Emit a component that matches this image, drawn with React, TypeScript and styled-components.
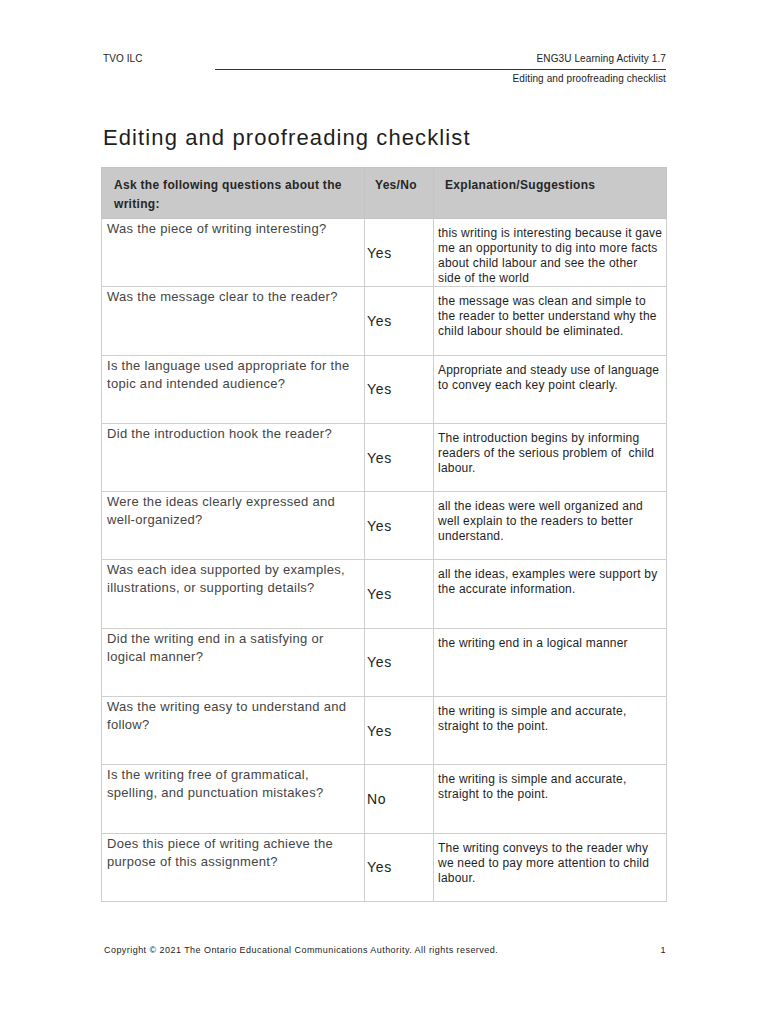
import React from "react";
import styled, { createGlobalStyle } from "styled-components";

const Global = createGlobalStyle`
  html, body { margin: 0; padding: 0; background: #ffffff; }
  body { font-family: "Liberation Sans", Arial, sans-serif; color: #222; }
`;

const Page = styled.div`
  width: 768px;
  height: 1024px;
  box-sizing: border-box;
  padding: 53px 102px 0 101px;
  display: flex;
  flex-direction: column;
`;

const RunningHead = styled.header`
  margin-left: 2px;
  display: flex;
  flex-direction: column;
  font-size: 10px;
  line-height: 12px;
  letter-spacing: 0.1px;
  color: #222;
`;

const HeadTop = styled.div`
  display: flex;
  justify-content: space-between;
`;

const HeadRule = styled.div`
  margin: 4px 0 0 112px;
  border-top: 1px solid #333;
`;

const HeadSub = styled.div`
  margin-top: 3px;
  text-align: right;
`;

const Title = styled.h1`
  margin: 40px 0 0 2px;
  font-size: 22px;
  line-height: 26px;
  letter-spacing: 1.1px;
  font-weight: normal;
  color: #1e1e1e;
`;

const Table = styled.table`
  margin: 16px 0 0 0;
  width: 565px;
  border-collapse: collapse;
  table-layout: fixed;
`;

const HeadCell = styled.th<{ $w: number; $pl: number }>`
  width: ${(p) => p.$w}px;
  height: 51px;
  box-sizing: border-box;
  background: #c9c9c9;
  border: 1px solid #c4c4c4;
  padding: 8px 6px 0 ${(p) => p.$pl}px;
  vertical-align: top;
  text-align: left;
  font-size: 12px;
  line-height: 19px;
  letter-spacing: 0.3px;
  font-weight: bold;
  color: #262626;
`;

const Row = styled.tr`
  height: 68.3px;
`;

const Line = styled.span`
  display: block;
  white-space: pre;
`;

const Question = styled.td`
  border: 1px solid #cfcfcf;
  padding: 1px 4px 0 5px;
  vertical-align: top;
  font-size: 13px;
  line-height: 18px;
  letter-spacing: 0.3px;
  color: #444;
`;

const Answer = styled.td`
  border: 1px solid #cfcfcf;
  padding: 0 0 0 2px;
  vertical-align: middle;
  font-size: 14px;
  line-height: 18px;
  letter-spacing: 0.7px;
  color: #222;
`;

const Explain = styled.td`
  border: 1px solid #cfcfcf;
  padding: 7px 2px 0 4px;
  vertical-align: top;
  font-size: 12px;
  line-height: 15px;
  letter-spacing: 0.22px;
  color: #1e1e1e;
`;

const Footer = styled.footer`
  margin: 42px 0 0 3px;
  display: flex;
  justify-content: space-between;
  font-size: 9px;
  line-height: 12px;
  letter-spacing: 0.45px;
  color: #222;
`;

type Item = { q: string[]; a: string; e: string[] };

const rows: Item[] = [
  {
    q: ["Was the piece of writing interesting?"],
    a: "Yes",
    e: [
      "this writing is interesting because it gave",
      "me an opportunity to dig into more facts",
      "about child labour and see the other",
      "side of the world",
    ],
  },
  {
    q: ["Was the message clear to the reader?"],
    a: "Yes",
    e: [
      "the message was clean and simple to",
      "the reader to better understand why the",
      "child labour should be eliminated.",
    ],
  },
  {
    q: ["Is the language used appropriate for the", "topic and intended audience?"],
    a: "Yes",
    e: ["Appropriate and steady use of language", "to convey each key point clearly."],
  },
  {
    q: ["Did the introduction hook the reader?"],
    a: "Yes",
    e: [
      "The introduction begins by informing",
      "readers of the serious problem of  child",
      "labour.",
    ],
  },
  {
    q: ["Were the ideas clearly expressed and", "well-organized?"],
    a: "Yes",
    e: [
      "all the ideas were well organized and",
      "well explain to the readers to better",
      "understand.",
    ],
  },
  {
    q: ["Was each idea supported by examples,", "illustrations, or supporting details?"],
    a: "Yes",
    e: ["all the ideas, examples were support by", "the accurate information."],
  },
  {
    q: ["Did the writing end in a satisfying or", "logical manner?"],
    a: "Yes",
    e: ["the writing end in a logical manner"],
  },
  {
    q: ["Was the writing easy to understand and", "follow?"],
    a: "Yes",
    e: ["the writing is simple and accurate,", "straight to the point."],
  },
  {
    q: ["Is the writing free of grammatical,", "spelling, and punctuation mistakes?"],
    a: "No",
    e: ["the writing is simple and accurate,", "straight to the point."],
  },
  {
    q: ["Does this piece of writing achieve the", "purpose of this assignment?"],
    a: "Yes",
    e: [
      "The writing conveys to the reader why",
      "we need to pay more attention to child",
      "labour.",
    ],
  },
];

export default function App() {
  return (
    <>
      <Global />
      <Page>
        <RunningHead>
          <HeadTop>
            <span>TVO ILC</span>
            <span>ENG3U Learning Activity 1.7</span>
          </HeadTop>
          <HeadRule />
          <HeadSub>Editing and proofreading checklist</HeadSub>
        </RunningHead>
        <Title>Editing and proofreading checklist</Title>
        <Table>
          <thead>
            <tr>
              <HeadCell $w={263} $pl={12}>
                <Line>Ask the following questions about the</Line>
                <Line>writing:</Line>
              </HeadCell>
              <HeadCell $w={69} $pl={10}>
                Yes/No
              </HeadCell>
              <HeadCell $w={233} $pl={11}>
                Explanation/Suggestions
              </HeadCell>
            </tr>
          </thead>
          <tbody>
            {rows.map((r, i) => (
              <Row key={i}>
                <Question>
                  {r.q.map((l, j) => (
                    <Line key={j}>{l}</Line>
                  ))}
                </Question>
                <Answer>{r.a}</Answer>
                <Explain>
                  {r.e.map((l, j) => (
                    <Line key={j}>{l}</Line>
                  ))}
                </Explain>
              </Row>
            ))}
          </tbody>
        </Table>
        <Footer>
          <span>
            Copyright © 2021 The Ontario Educational Communications Authority. All rights reserved.
          </span>
          <span>1</span>
        </Footer>
      </Page>
    </>
  );
}
